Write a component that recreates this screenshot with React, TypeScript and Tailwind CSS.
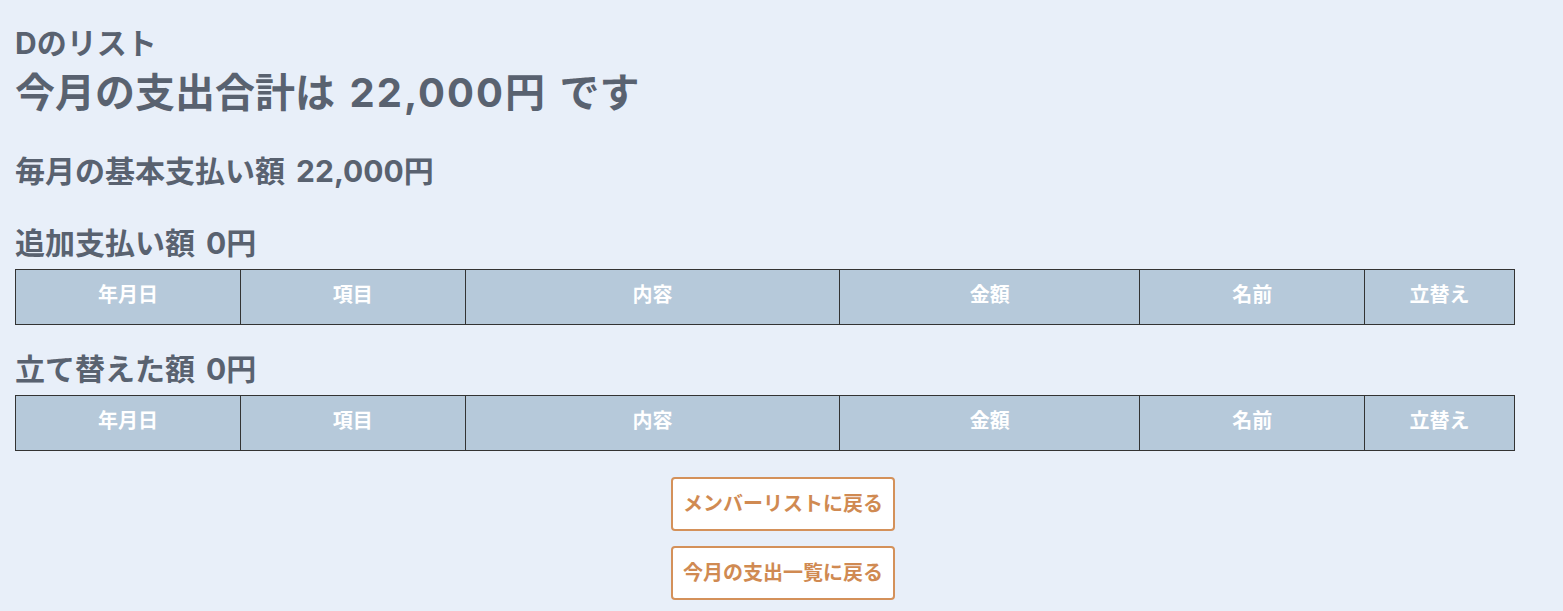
import React from "react";

const cols = [
  { label: "年月日", w: "w-[15%]" },
  { label: "項目", w: "w-[15%]" },
  { label: "内容", w: "w-[25%]" },
  { label: "金額", w: "w-[20%]" },
  { label: "名前", w: "w-[15%]" },
  { label: "立替え", w: "w-[10%]" },
];

function Table() {
  return (
    <table className="w-[1500px] border-collapse table-fixed">
      <thead>
        <tr>
          {cols.map((c) => (
            <th
              key={c.label}
              className={`${c.w} h-[55px] border border-[#333333] bg-[#b6c9da] text-white text-[20px] leading-[20px] font-bold text-center p-0 pb-[4px]`}
            >
              {c.label}
            </th>
          ))}
        </tr>
      </thead>
    </table>
  );
}

export default function App() {
  return (
    <div
      className="min-h-[611px] bg-[#e8eff9] text-[#596270] pl-[15px] pt-[25px]"
      style={{ fontFamily: 'Inter, "Noto Sans CJK JP", sans-serif' }}
    >
      <div className="text-[30px] font-bold leading-[36px]">Dのリスト</div>
      <div className="text-[40px] font-bold leading-[50px] mt-[7px] [word-spacing:5px]">
        今月の支出合計は <span className="tracking-[2px]">22,000</span>円 です
      </div>
      <div className="text-[30px] font-bold leading-[36px] mt-[35px] [word-spacing:4px]">
        毎月の基本支払い額 22,000円
      </div>
      <div className="text-[30px] font-bold leading-[36px] mt-[36px] mb-[8px] [word-spacing:4px]">
        追加支払い額 0円
      </div>
      <Table />
      <div className="text-[30px] font-bold leading-[36px] mt-[26px] mb-[8px] [word-spacing:4px]">
        立て替えた額 0円
      </div>
      <Table />
      <div className="w-[1536px] flex flex-col items-center gap-[15px] mt-[26px] pb-[11px]">
        <button className="w-[224px] h-[54px] bg-white border-2 border-[#d4915a] rounded-[4px] text-[#d08a52] text-[20px] font-bold">
          メンバーリストに戻る
        </button>
        <button className="w-[224px] h-[54px] bg-white border-2 border-[#d4915a] rounded-[4px] text-[#d08a52] text-[20px] font-bold">
          今月の支出一覧に戻る
        </button>
      </div>
    </div>
  );
}
